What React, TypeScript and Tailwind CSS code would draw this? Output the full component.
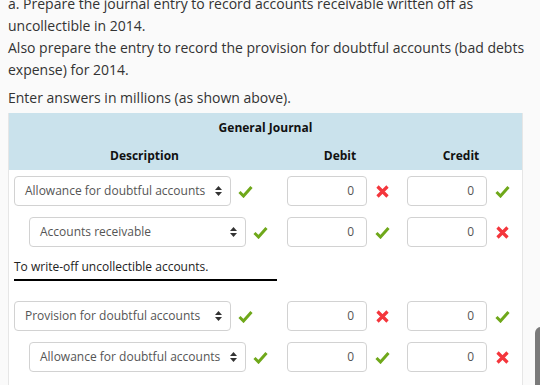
const rows = [
  { account: "Allowance for doubtful accounts", indent: false, acc: true, debit: false, credit: true },
  { account: "Accounts receivable", indent: true, acc: true, debit: true, credit: false },
];
const rows2 = [
  { account: "Provision for doubtful accounts", indent: false, acc: true, debit: false, credit: true },
  { account: "Allowance for doubtful accounts", indent: true, acc: true, debit: true, credit: false },
];

function Check() {
  return (
    <svg width="15" height="13" viewBox="0 0 15 13" className="shrink-0">
      <path d="M1.5 7 L5.5 11 L13.5 2" fill="none" stroke="#6fa81a" strokeWidth="3" strokeLinejoin="miter" />
    </svg>
  );
}

function Cross() {
  return (
    <svg width="15" height="13" viewBox="0 0 15 13" className="shrink-0">
      <path d="M2.5 1.5 L12.5 11.5 M12.5 1.5 L2.5 11.5" fill="none" stroke="#f4363c" strokeWidth="3.2" />
    </svg>
  );
}

function Mark({ ok }: { ok: boolean }) {
  return ok ? <Check /> : <Cross />;
}

function Chevrons() {
  return (
    <svg width="7" height="10" viewBox="0 0 7 10" className="shrink-0">
      <path d="M3.5 0 L7 4 L0 4 Z M3.5 10 L7 6 L0 6 Z" fill="#333" />
    </svg>
  );
}

function Row({ r }: { r: (typeof rows)[number] }) {
  return (
    <div className="grid h-[30px] grid-cols-[271px_120px_1fr]">
      <div className={`flex items-center gap-[7px] ${r.indent ? "pl-[20px]" : "pl-[5px]"}`}>
        <div className="flex h-[30px] w-[217px] items-center justify-between rounded-[4px] border border-[#d2d2d2] bg-white pl-[10px] pr-[8px] text-[12px] text-[#555]">
          <span className="whitespace-nowrap">{r.account}</span>
          <Chevrons />
        </div>
        <Mark ok={r.acc} />
      </div>
      <div className="flex items-center gap-[8px] pl-[7px]">
        <div className="flex h-[30px] w-[80px] items-center justify-end rounded-[4px] border border-[#d2d2d2] bg-white pr-[12px] text-[12px] text-[#555]">
          0
        </div>
        <Mark ok={r.debit} />
      </div>
      <div className="flex items-center gap-[8px] pl-[7px]">
        <div className="flex h-[30px] w-[80px] items-center justify-end rounded-[4px] border border-[#d2d2d2] bg-white pr-[12px] text-[12px] text-[#555]">
          0
        </div>
        <Mark ok={r.credit} />
      </div>
    </div>
  );
}

export default function App() {
  return (
    <div className="relative h-[385px] w-[540px] overflow-hidden bg-[#fafafa] font-['Open_Sans',sans-serif] text-[#333]">
      <div className="-mt-[7px] pl-[8px] text-[14px] leading-[22px]">
        <p className="pr-[40px]">a. Prepare the journal entry to record accounts receivable written off as uncollectible in 2014.</p>
        <p className="-mr-[10px]">Also prepare the entry to record the provision for doubtful accounts (bad debts expense) for 2014.</p>
        <p className="mt-[6px]">Enter answers in millions (as shown above).</p>
      </div>

      <div className="ml-[8px] mt-[4px] w-[515px] border-x border-[#e6e6e6] bg-white pb-[20px]">
        <div className="h-[57px] bg-[#cae2ec] text-[12px] font-bold text-[#111]">
          <div className="pt-[6px] text-center leading-[18px]">General Journal</div>
          <div className="mt-[10px] grid grid-cols-[271px_120px_1fr] leading-[18px]">
            <div className="text-center">Description</div>
            <div className="text-center">Debit</div>
            <div className="text-center">Credit</div>
          </div>
        </div>

        <div className="flex flex-col gap-[11px] pt-[6px]">
          {rows.map((r, i) => (
            <Row key={i} r={r} />
          ))}
        </div>
        <div className="ml-[5px] w-[263px] border-b-2 border-black pb-[3px] pt-[11px] text-[12px] leading-[18px] text-[#222]">
          To write-off uncollectible accounts.
        </div>
        <div className="flex flex-col gap-[11px] pt-[20px]">
          {rows2.map((r, i) => (
            <Row key={i} r={r} />
          ))}
        </div>
      </div>

      <div className="absolute left-[535px] top-[327px] h-[70px] w-[12px] rounded-[6px] bg-[#7a7a7a]" />
    </div>
  );
}
